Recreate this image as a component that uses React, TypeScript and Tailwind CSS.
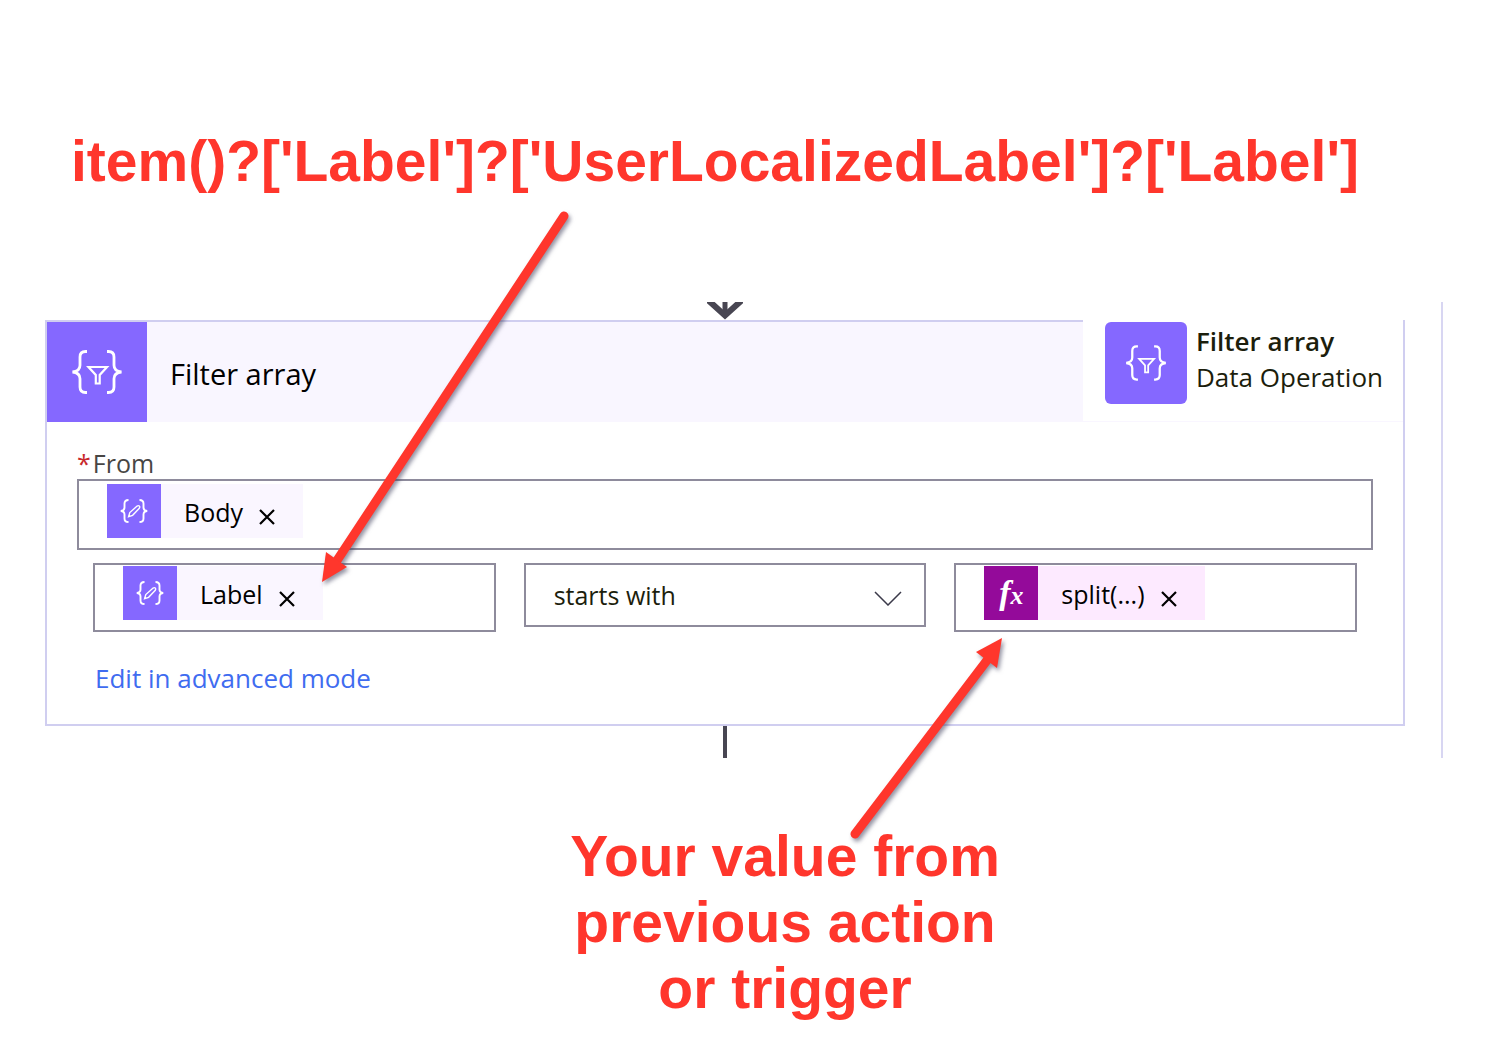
import { useState } from "react";

type TokenProps = {
  label: string;
  kind: "data" | "fx";
};

function FilterIcon({ className }: { className: string }) {
  return (
    <svg viewBox="0 0 52 44" fill="none" stroke="white" strokeWidth="2.8" className={className}>
      <path d="M16 1.5h-1.500c-3.500 0-5.500 2-5.500 5.500v8.300c0 3.800-2.500 6.200-7.500 6.700 5 .5 7.500 2.900 7.500 6.700v8.300c0 3.500 2 5.500 5.500 5.500h1.500" />
      <path d="M36 1.500h1.500c3.500 0 5.500 2 5.500 5.500v8.300c0 3.800 2.500 6.200 7.500 6.700-5 .5-7.500 2.900-7.500 6.700v8.300c0 3.500-2 5.500-5.500 5.500h-1.500" />
      <path strokeWidth="2.2" d="M17.500 17h18.500l-7.300 8v8.500h-3.900v-8.500z" />
    </svg>
  );
}

function ComposeIcon() {
  return (
    <svg viewBox="0 0 28 24" fill="none" stroke="white" strokeWidth="1.9" className="h-6 w-7">
      <path d="M8.5 1c-3 0-4 1.100-4 3.600v3.900c0 2-1.100 3.200-3.700 3.500 2.600 .3 3.700 1.500 3.700 3.500v3.900c0 2.500 1 3.600 4 3.600" />
      <path d="M19.5 1c3 0 4 1.100 4 3.600v3.900c0 2 1.100 3.200 3.700 3.500-2.600 .3-3.700 1.500-3.700 3.500v3.900c0 2.500-1 3.600-4 3.600" />
      <path strokeWidth="1.4" d="M8.600 17.600l1.200-4 7.300-6.500c1.700-1.200 3.400 .5 2.200 2.200l-6.700 7z" />
    </svg>
  );
}

function Token({ label, kind }: TokenProps) {
  const isFx = kind === "fx";
  return (
    <span className={`flex h-[54px] items-center ${isFx ? "bg-[#fdeaff]" : "bg-[#faf6ff]"}`}>
      <span
        className={`flex size-[54px] items-center justify-center ${isFx ? "bg-[#940a9a]" : "bg-[#8568ff]"}`}
      >
        {isFx ? (
          <span className="font-['Liberation_Serif',serif] text-[34px] leading-none font-bold text-white italic">
            f<span className="text-[26px]">x</span>
          </span>
        ) : (
          <ComposeIcon />
        )}
      </span>
      <span className="pt-px pr-4 pl-[23px] text-[25px] leading-9">{label}</span>
      <button type="button" aria-label={`Remove ${label}`} className="mt-3 mr-7">
        <svg viewBox="0 0 16 16" stroke="black" strokeWidth="2.2" className="size-4">
          <path d="M1 1l14 14M15 1L1 15" />
        </svg>
      </button>
    </span>
  );
}

function Arrows() {
  return (
    <svg
      viewBox="0 0 1500 1041"
      className="pointer-events-none absolute top-0 left-0 h-[1041px] w-[1500px] max-w-none drop-shadow-[2px_3px_2px_rgba(60,60,90,0.55)]"
      fill="#ff362c"
      stroke="#ff362c"
    >
      <path d="M564 216L336 562" strokeWidth="9" strokeLinecap="round" />
      <path stroke="none" d="M322 582l4-30 21 15z" />
      <path d="M855 834L988 659" strokeWidth="9" strokeLinecap="round" />
      <path stroke="none" d="M1002 638l-26 14 21 16z" />
    </svg>
  );
}

export default function App() {
  const [operator, setOperator] = useState("starts with");

  return (
    <main className="relative min-h-screen overflow-hidden bg-white font-['Open_Sans','Noto_Sans',sans-serif] text-black">
      <h1 className="h-[302px] pt-32 pl-[71px] font-['Liberation_Sans',Arial,sans-serif] text-[57px] leading-[66px] font-bold whitespace-nowrap text-[#ff362c]">
        item()?['Label']?['UserLocalizedLabel']?['Label']
      </h1>

      <section className="mr-[57px] ml-[45px] border-r-2 border-[#d8d6f2] pr-9">
        <svg viewBox="0 0 36 18" className="mx-auto h-[18px] w-9" fill="none" stroke="#484652">
          <path strokeWidth="6" d="M1 -2L18 13.500L35 -2" />
          <path strokeWidth="5" d="M18 0v12" />
        </svg>

        <div className="border-2 border-[#d0cef0]">
          <div className="relative flex h-[100px] items-center bg-[#f9f6ff]">
            <div className="flex size-[100px] items-center justify-center bg-[#8568ff]">
              <FilterIcon className="h-11 w-[52px]" />
            </div>
            <h2 className="pt-1 pl-[23px] text-[29px]">Filter array</h2>
            <div className="absolute -top-[3px] right-0 flex h-[102px] items-start gap-[9px] bg-white pt-[3px] pr-5 pl-[22px]">
              <div className="flex size-[82px] items-center justify-center rounded-md bg-[#8568ff]">
                <FilterIcon className="h-9 w-[42px]" />
              </div>
              <div className="pt-px text-[26px] leading-9 text-[#1c1e0c]">
                <p className="font-semibold">Filter array</p>
                <p>Data Operation</p>
              </div>
            </div>
          </div>

          <div className="px-[30px] pt-[25px] pb-7">
            <p className="flex gap-0.5 text-[25px] leading-8 text-[#484644]">
              <span className="text-[#c8282c]">*</span>
              <span>From</span>
            </p>
            <div className="flex h-[71px] items-start border-2 border-[#8e8b9c] pt-[3px] pl-7">
              <Token label="Body" kind="data" />
            </div>

            <div className="mt-[13px] grid grid-cols-3 items-start gap-7 px-4">
              <div className="flex h-[69px] items-start border-2 border-[#8e8b9c] pt-px pl-7">
                <Token label="Label" kind="data" />
              </div>
              <div className="relative">
                <select
                  aria-label="Condition"
                  value={operator}
                  onChange={(e) => setOperator(e.target.value)}
                  className="h-16 w-full appearance-none border-2 border-[#8e8b9c] bg-white pt-0.5 pl-7 text-[25px] text-[#1c1e0c]"
                >
                  <option>starts with</option>
                  <option>ends with</option>
                  <option>contains</option>
                </select>
                <svg
                  viewBox="0 0 28 15"
                  fill="none"
                  stroke="#3b3a4a"
                  strokeWidth="1.5"
                  className="pointer-events-none absolute top-7 right-6 h-[15px] w-7"
                >
                  <path d="M1 1l13 13L27 1" />
                </svg>
              </div>
              <div className="flex h-[69px] items-start border-2 border-[#8e8b9c] pt-px pl-7">
                <Token label="split(...)" kind="fx" />
              </div>
            </div>

            <a href="#advanced" className="mt-7 ml-[18px] inline-block text-[26px] leading-9 text-[#3f6cf0]">
              Edit in advanced mode
            </a>
          </div>
        </div>
        <div className="mx-auto h-8 w-1 bg-[#484652]"></div>
      </section>

      <p className="mx-auto mt-[65px] w-[450px] translate-x-[35px] text-center font-['Liberation_Sans',Arial,sans-serif] text-[57px] leading-[66px] font-bold text-[#ff362c]">
        Your value from previous action or trigger
      </p>

      <Arrows />
    </main>
  );
}
